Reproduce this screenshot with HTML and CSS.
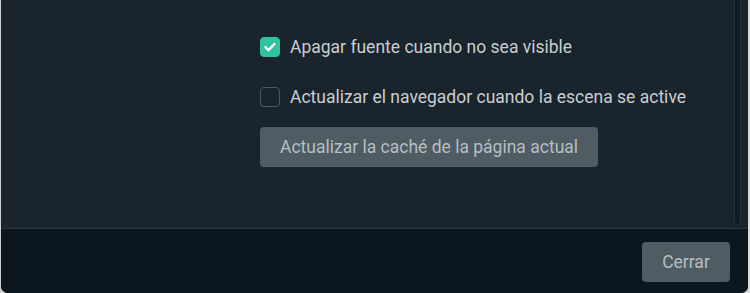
FILE: index.html
```html
<!DOCTYPE html>
<html lang="es">
<head>
<meta charset="utf-8">
<link rel="stylesheet" href="styles.css">
</head>
<body>
<div class="page">
  <div class="edge"></div>
  <div class="window">
    <div class="content">
      <div class="options">
        <label class="option">
          <span class="box checked">
            <svg viewBox="0 0 20 20" width="20" height="20"><path d="M5.5 10.2l3 3 6-6.2" fill="none" stroke="#fff" stroke-width="2.4" stroke-linecap="round" stroke-linejoin="round"/></svg>
          </span>
          <span class="label">Apagar fuente cuando no sea visible</span>
        </label>
        <label class="option">
          <span class="box"></span>
          <span class="label">Actualizar el navegador cuando la escena se active</span>
        </label>
        <button class="btn wide">Actualizar la caché de la página actual</button>
      </div>
      <div class="scrollbar"><div class="track"></div></div>
    </div>
    <div class="footer">
      <button class="btn close">Cerrar</button>
    </div>
  </div>
</div>
</body>
</html>
```
FILE: styles.css
```css
html, body {
  margin: 0;
  padding: 0;
  background: #d9d9d9;
  width: 750px;
  height: 293px;
  overflow: hidden;
}
.page {
  display: flex;
  height: 293px;
}
.edge {
  width: 1px;
  background: #cfcfcf;
}
.window {
  width: 747px;
  height: 293px;
  display: flex;
  flex-direction: column;
  background: #19242d;
  border-radius: 0 0 7px 7px;
  overflow: hidden;
  font-family: Roboto, "Liberation Sans", sans-serif;
}
.content {
  height: 228px;
  display: flex;
  border-bottom: 1px solid #2a3640;
}
.options {
  flex: 1;
  padding: 37px 0 0 259px;
  display: flex;
  flex-direction: column;
  align-items: flex-start;
}
.option {
  display: flex;
  align-items: center;
  height: 20px;
  margin-bottom: 30px;
  color: #c9ced2;
  font-size: 17.5px;
}
.option + .option {
  margin-bottom: 20px;
}
.box {
  width: 18px;
  height: 18px;
  border: 1px solid #4c5961;
  border-radius: 4px;
  margin-right: 10px;
  display: flex;
}
.box.checked {
  background: #31c29f;
  border-color: #31c29f;
}
.box svg {
  margin: -1px;
}
.label {
  line-height: 20px;
  white-space: nowrap;
}
.btn {
  font-family: Roboto, "Liberation Sans", sans-serif;
  font-size: 17.5px;
  color: #b6bfc4;
  background: #4f5c63;
  border: none;
  border-radius: 4px;
  height: 40px;
  padding: 0;
  white-space: nowrap;
}
.btn.wide {
  width: 338px;
  text-align: left;
  padding-left: 20px;
}
.scrollbar {
  width: 14px;
  padding: 0 0 4px 2px;
}
.track {
  width: 5px;
  height: 100%;
  background: #0f1a21;
  border: 1px solid #26323a;
  border-top: none;
  border-radius: 0 0 4px 4px;
}
.footer {
  flex: 1;
  background: #0b161e;
  display: flex;
  justify-content: flex-end;
  align-items: flex-start;
  padding: 13px 18px 0 0;
}
.btn.close {
  width: 88px;
}
```
